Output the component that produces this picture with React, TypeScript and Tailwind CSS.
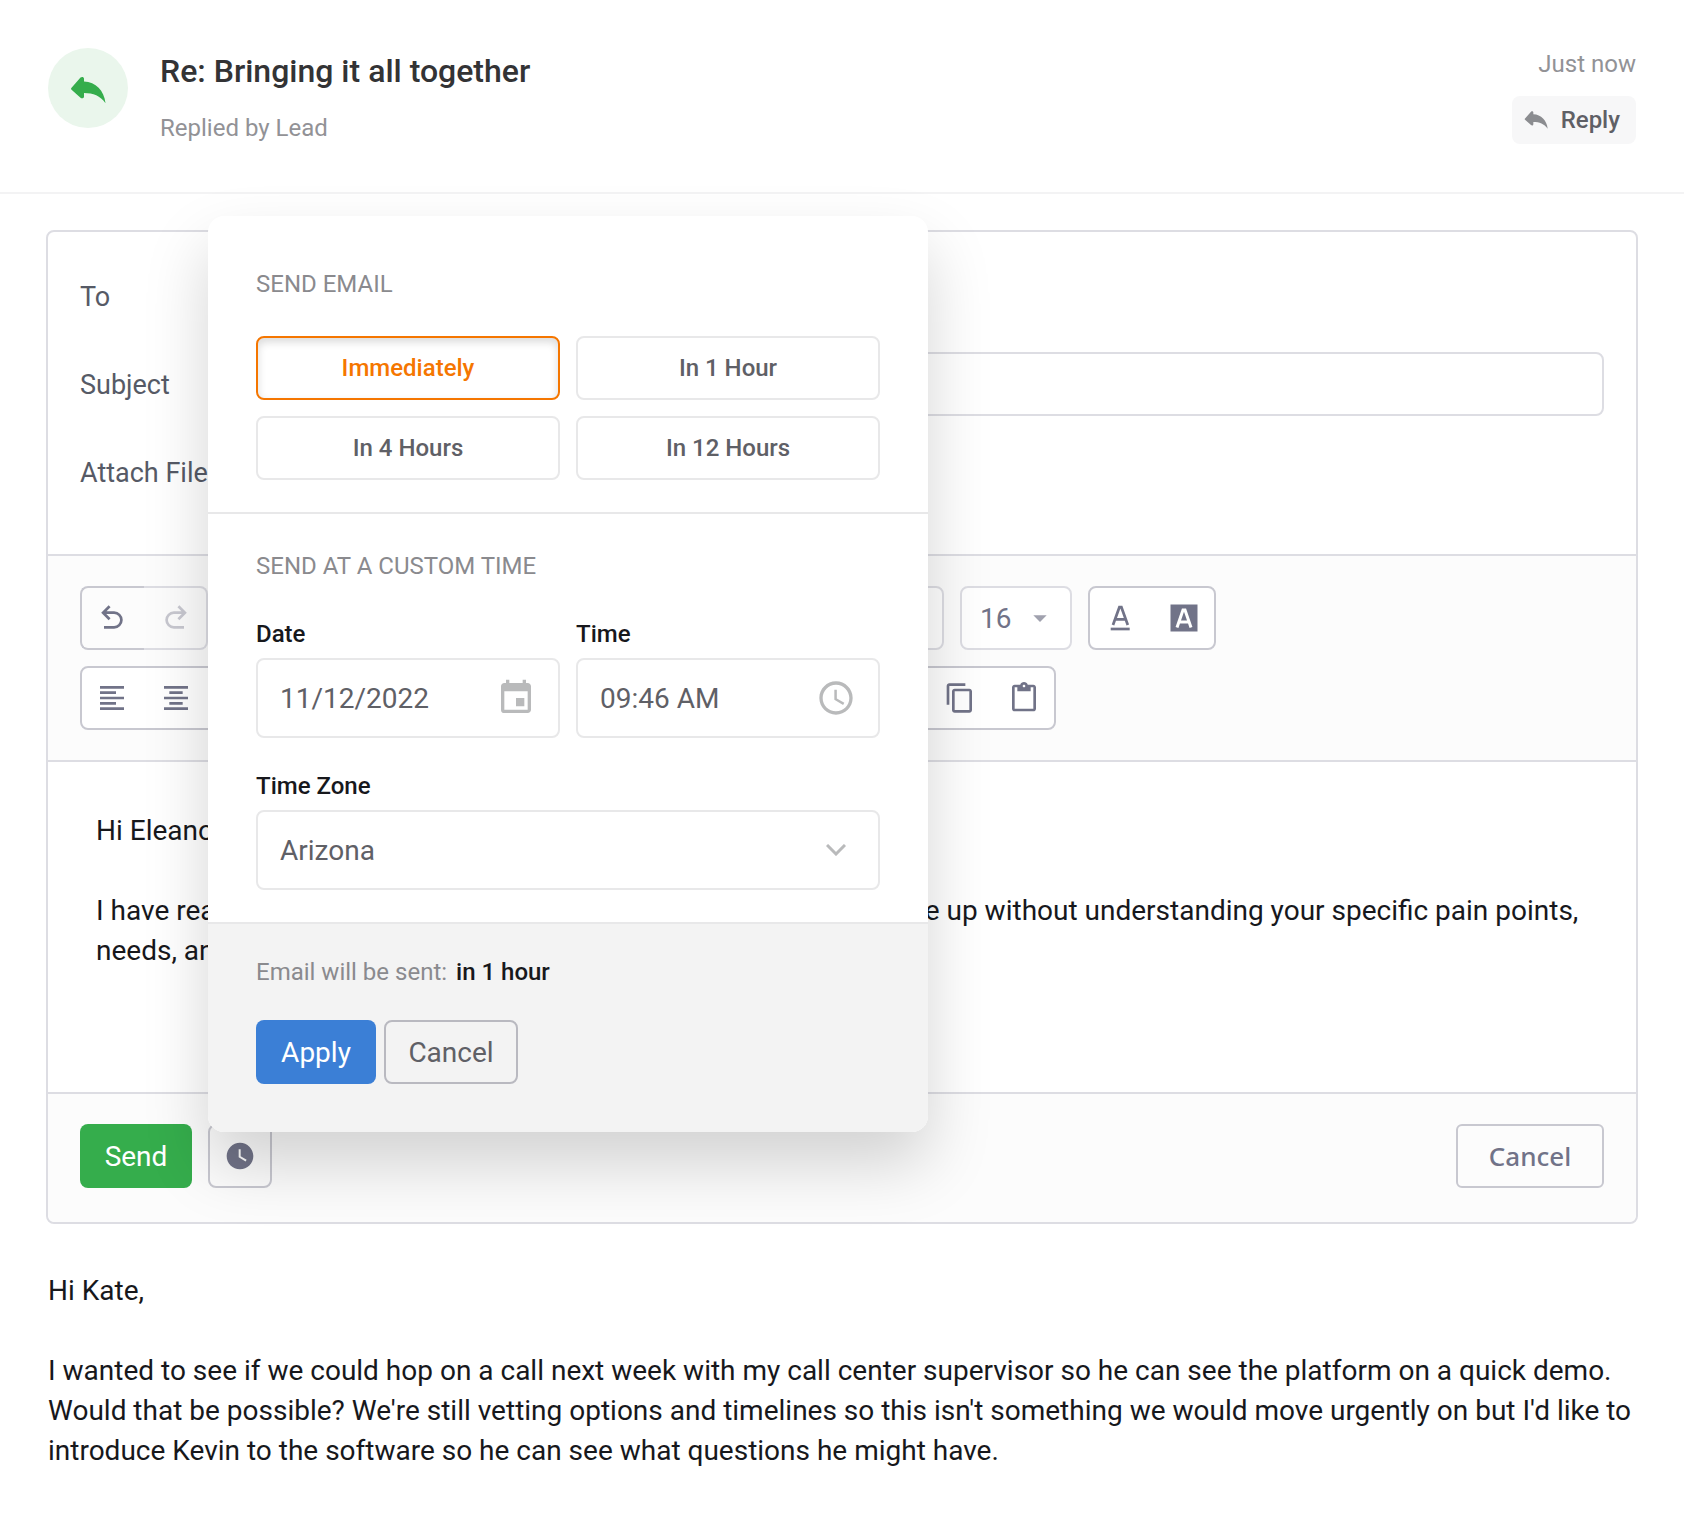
import React from 'react';
import {
  MdAccessTime,
  MdArrowDropDown,
  MdContentCopy,
  MdContentCut,
  MdContentPaste,
  MdEvent,
  MdFormatAlignCenter,
  MdFormatAlignJustify,
  MdFormatAlignLeft,
  MdFormatAlignRight,
  MdFormatBold,
  MdFormatClear,
  MdFormatIndentDecrease,
  MdFormatIndentIncrease,
  MdFormatItalic,
  MdFormatListBulleted,
  MdFormatListNumbered,
  MdFormatStrikethrough,
  MdFormatUnderlined,
  MdImage,
  MdLink,
  MdWatchLater,
} from 'react-icons/md';

const ReplyIcon: React.FC<{ className?: string }> = ({ className }) => (
  <svg viewBox="-1 0 37 28" fill="currentColor" className={className} aria-hidden="true">
    <path d="M.6 11.600 9.800 1.200C11 0 13.400.400 13.400 2.400V5.300C25.500 5.800 34 14.500 35.500 27.500C30 20 23 17.200 13.400 17.200V20.600C13.400 22.600 11 23.100 9.800 21.900L.6 13.800C-.1 13.100-.1 12.300.6 11.600Z" />
  </svg>
);

const UndoIcon: React.FC<{ className?: string }> = ({ className }) => (
  <svg viewBox="0 0 32 32" fill="none" stroke="currentColor" strokeWidth={2.7} className={className} aria-hidden="true">
    <path d="M13.600 4.200 7.100 10.700 13.600 17.200M7.100 10.700H18.100A7.300 7.300 0 0 1 18.100 25.300H8" />
  </svg>
);

const TextColorIcon = () => (
  <svg viewBox="0 0 32 32" fill="none" stroke="currentColor" className="h-8 w-8" aria-hidden="true">
    <path d="M9 23 15.400 5.200H17.400L23.800 23M11.200 17.400H21.600" strokeWidth={2.7} />
    <path d="M6.700 27H25.700" strokeWidth={2.7} />
  </svg>
);

const FillColorIcon = () => (
  <svg viewBox="0 0 32 32" className="h-8 w-8" aria-hidden="true">
    <path d="M2.500 2.500H29.500V29.500H2.500Z" fill="currentColor" />
    <path d="M9 25.500 15 8H17L23 25.500M11 20H21" fill="none" stroke="#fff" strokeWidth={3} />
  </svg>
);

interface ToolGroupProps {
  tools: { label: string; icon: React.ReactNode }[];
}

const ToolGroup: React.FC<ToolGroupProps> = ({ tools }) => (
  <div className="flex h-16 rounded-lg border-2 border-[#c8c8d0] bg-white">
    {tools.map((tool) => (
      <button
        key={tool.label}
        type="button"
        aria-label={tool.label}
        className="flex w-16 items-center justify-center text-[#717388] first:-ml-0.5 last:-mr-0.5"
      >
        {tool.icon}
      </button>
    ))}
  </div>
);

const quickTimes = ['Immediately', 'In 1 Hour', 'In 4 Hours', 'In 12 Hours'];

const icon = 'h-8 w-8';

const SchedulePopup = () => (
  <div className="absolute bottom-14 left-0 z-10 w-[720px] overflow-hidden rounded-2xl bg-white shadow-[0_32px_64px_rgba(0,0,0,0.17)]">
    <section className="border-b-2 border-[#e8e8e9] px-12 pt-12 pb-8">
      <h2 className="text-2xl leading-10 text-[#8a8a8e]">SEND EMAIL</h2>
      <div className="mt-8 grid grid-cols-2 gap-4">
        {quickTimes.map((time, index) => (
          <button
            key={time}
            type="button"
            className={`h-16 rounded-lg border-2 text-2xl font-medium ${
              index === 0
                ? 'border-[#f57600] text-[#f57600] shadow-[inset_0_4px_8px_rgba(0,0,0,0.15)]'
                : 'border-[#e8e8e9] text-[#5f6066]'
            }`}
          >
            {time}
          </button>
        ))}
      </div>
    </section>

    <section className="border-b-2 border-[#e8e8e9] px-12 py-8">
      <h2 className="text-2xl leading-10 text-[#8a8a8e]">SEND AT A CUSTOM TIME</h2>
      <div className="mt-8 grid grid-cols-2 gap-4">
        <div>
          <label htmlFor="date" className="block text-2xl leading-8 font-medium text-[#17181c]">Date</label>
          <div className="mt-2 flex h-20 items-center rounded-lg border-2 border-[#e8e8e9] px-[22px]">
            <input id="date" type="text" defaultValue="11/12/2022" className="w-full min-w-0 pt-0.5 text-[28px] text-[#5f6066]" />
            <MdEvent className="h-10 w-10 shrink-0 text-[#b9babb]" />
          </div>
        </div>
        <div>
          <label htmlFor="time" className="block text-2xl leading-8 font-medium text-[#17181c]">Time</label>
          <div className="mt-2 flex h-20 items-center rounded-lg border-2 border-[#e8e8e9] px-[22px]">
            <input id="time" type="text" defaultValue="09:46 AM" className="w-full min-w-0 pt-0.5 text-[28px] text-[#5f6066]" />
            <MdAccessTime className="h-10 w-10 shrink-0 text-[#b9babb]" />
          </div>
        </div>
      </div>
      <label htmlFor="zone" className="mt-8 block text-2xl leading-8 font-medium text-[#17181c]">Time Zone</label>
      <div className="relative mt-2">
        <select
          id="zone"
          className="h-20 w-full appearance-none rounded-lg border-2 border-[#e8e8e9] px-[22px] pt-0.5 text-[28px] text-[#5f6066]"
        >
          <option>Arizona</option>
        </select>
        <svg
          viewBox="0 0 20 12"
          fill="none"
          stroke="#b9babb"
          strokeWidth={3}
          className="pointer-events-none absolute top-[34px] right-[34px] h-3 w-5"
          aria-hidden="true"
        >
          <path d="M1 1 10 10 19 1" />
        </svg>
      </div>
    </section>

    <div className="bg-[#f3f3f3] px-12 pt-8 pb-12">
      <p className="text-2xl leading-8 text-[#8a8a8e]">
        Email will be sent: <strong className="ml-[3px] font-medium text-[#17181c]">in 1 hour</strong>
      </p>
      <div className="mt-8 flex gap-2">
        <button type="button" className="h-16 w-30 rounded-lg bg-[#3b7fd6] pt-0.5 text-[28px] text-white">
          Apply
        </button>
        <button type="button" className="h-16 w-[134px] rounded-lg border-2 border-[#b9b9c0] pt-0.5 text-[28px] text-[#5f6066]">
          Cancel
        </button>
      </div>
    </div>
  </div>
);

const Toolbar = () => (
  <div className="flex flex-col gap-4 border-y-2 border-[#dddde3] bg-[#fcfcfc] px-8 py-[30px]">
    <div className="flex gap-4">
      <div className="flex h-16">
        <button
          type="button"
          aria-label="Undo"
          className="flex w-16 items-center justify-center rounded-l-lg border-2 border-r-0 border-[#c8c8d0] pr-0.5 text-[#717388]"
        >
          <UndoIcon className={icon} />
        </button>
        <button
          type="button"
          aria-label="Redo"
          disabled
          className="flex w-16 items-center justify-center rounded-r-lg border-2 border-l-0 border-[#dddde3] pl-0.5 text-[#c8c8d0]"
        >
          <UndoIcon className="h-8 w-8 -scale-x-100" />
        </button>
      </div>
      <ToolGroup
        tools={[
          { label: 'Bold', icon: <MdFormatBold className={icon} /> },
          { label: 'Italic', icon: <MdFormatItalic className={icon} /> },
          { label: 'Underline', icon: <MdFormatUnderlined className={icon} /> },
          { label: 'Strikethrough', icon: <MdFormatStrikethrough className={icon} /> },
        ]}
      />
      <select
        aria-label="Font"
        className="h-16 w-[448px] appearance-none rounded-lg border-2 border-[#dddde3] bg-white px-[18px] text-[28px] text-[#717388]"
      >
        <option>Roboto</option>
      </select>
      <div className="relative">
        <select
          aria-label="Font size"
          className="h-16 w-28 appearance-none rounded-lg border-2 border-[#dddde3] bg-white px-[18px] pt-0.5 text-[28px] text-[#717388]"
        >
          <option>16</option>
        </select>
        <MdArrowDropDown className="pointer-events-none absolute top-4 right-4 h-8 w-8 text-[#a0a1ae]" />
      </div>
      <ToolGroup
        tools={[
          { label: 'Text color', icon: <TextColorIcon /> },
          { label: 'Highlight color', icon: <FillColorIcon /> },
        ]}
      />
    </div>
    <div className="flex gap-4">
      <ToolGroup
        tools={[
          { label: 'Align left', icon: <MdFormatAlignLeft className={icon} /> },
          { label: 'Align center', icon: <MdFormatAlignCenter className={icon} /> },
          { label: 'Align right', icon: <MdFormatAlignRight className={icon} /> },
          { label: 'Justify', icon: <MdFormatAlignJustify className={icon} /> },
        ]}
      />
      <ToolGroup
        tools={[
          { label: 'Bulleted list', icon: <MdFormatListBulleted className={icon} /> },
          { label: 'Numbered list', icon: <MdFormatListNumbered className={icon} /> },
        ]}
      />
      <ToolGroup
        tools={[
          { label: 'Decrease indent', icon: <MdFormatIndentDecrease className={icon} /> },
          { label: 'Increase indent', icon: <MdFormatIndentIncrease className={icon} /> },
        ]}
      />
      <ToolGroup
        tools={[
          { label: 'Link', icon: <MdLink className={icon} /> },
          { label: 'Image', icon: <MdImage className={icon} /> },
        ]}
      />
      <ToolGroup tools={[{ label: 'Clear formatting', icon: <MdFormatClear className={icon} /> }]} />
      <ToolGroup
        tools={[
          { label: 'Cut', icon: <MdContentCut className={icon} /> },
          { label: 'Copy', icon: <MdContentCopy className={icon} /> },
          { label: 'Paste', icon: <MdContentPaste className={icon} /> },
        ]}
      />
    </div>
  </div>
);

const Composer = () => (
  <form className="mx-[46px] mt-9 rounded-lg border-2 border-[#dddde3]">
    <div className="flex flex-col px-8 pt-8 pb-[50px] text-[27px] text-[#565a66]">
      <div className="flex h-16 items-center">
        <label htmlFor="to" className="w-40 pt-0.5">To</label>
        <input id="to" type="text" className="h-16 flex-1" />
      </div>
      <div className="mt-6 flex h-16 items-center">
        <label htmlFor="subject" className="w-40 pt-0.5">Subject</label>
        <input id="subject" type="text" className="h-16 flex-1 rounded-lg border-2 border-[#dddde3] px-5" />
      </div>
      <div className="mt-6 flex h-16 items-center">
        <label htmlFor="files" className="pt-0.5">Attach File</label>
        <input id="files" type="file" className="sr-only" />
      </div>
    </div>

    <Toolbar />

    <div className="min-h-[330px] px-12 pt-[49px] pb-12 text-[28px] leading-10 text-[#17181c]">
      <p>Hi Eleanor,</p>
      <p className="mt-10">
        I have really liked our conversation, and I do not want to offer a price up without understanding your specific
        pain points, needs, and goals.
      </p>
    </div>

    <div className="flex items-center gap-4 rounded-b-lg border-t-2 border-[#dddde3] bg-[#fcfcfc] px-8 pt-[30px] pb-[34px]">
      <button type="submit" className="h-16 w-28 rounded-lg bg-[#35ad4c] pt-0.5 text-[28px] text-white">
        Send
      </button>
      <div className="relative">
        <button
          type="button"
          aria-label="Schedule"
          className="flex h-16 w-16 items-center justify-center rounded-lg border-2 border-[#c8c8d0] text-[#717388]"
        >
          <MdWatchLater className={icon} />
        </button>
        <SchedulePopup />
      </div>
      <button
        type="button"
        className="ml-auto h-16 w-37 rounded-md border-2 border-[#c8c8d0] font-['Noto_Sans',sans-serif] text-[26px] font-medium text-[#717388]"
      >
        Cancel
      </button>
    </div>
  </form>
);

const App = () => {
  return (
    <main className="bg-white pb-14 font-[Roboto,sans-serif]">
      <header className="flex items-start border-b-2 border-[#f3f3f4] px-12 pt-12 pb-12">
        <div className="flex h-20 w-20 items-center justify-center rounded-full bg-[#eaf6ec] pt-1 text-[#35ad4c]">
          <ReplyIcon className="h-7 w-9" />
        </div>
        <div className="ml-8">
          <h1 className="text-[32px] leading-[46px] font-medium text-[#333335]">Re: Bringing it all together</h1>
          <p className="mt-[18px] text-2xl leading-8 text-[#929296]">Replied by Lead</p>
        </div>
        <div className="ml-auto flex flex-col items-end">
          <span className="text-2xl leading-8 text-[#929296]">Just now</span>
          <button
            type="button"
            className="mt-4 flex h-12 items-center gap-[13px] rounded-lg bg-[#f7f7f8] pr-4 pl-3 text-2xl font-medium text-[#5f6066]"
          >
            <ReplyIcon className="h-5 w-6 text-[#8b8c90]" />
            Reply
          </button>
        </div>
      </header>

      <Composer />

      <article className="mt-[47px] px-12 text-[28px] leading-10 text-[#17181c]">
        <p>Hi Kate,</p>
        <p className="mt-10">
          I wanted to see if we could hop on a call next week with my call center supervisor so he can see the platform
          on a quick demo. Would that be possible? We're still vetting options and timelines so this isn't something we
          would move urgently on but I'd like to introduce Kevin to the software so he can see what questions he might
          have.
        </p>
      </article>
    </main>
  );
};

export default App;
